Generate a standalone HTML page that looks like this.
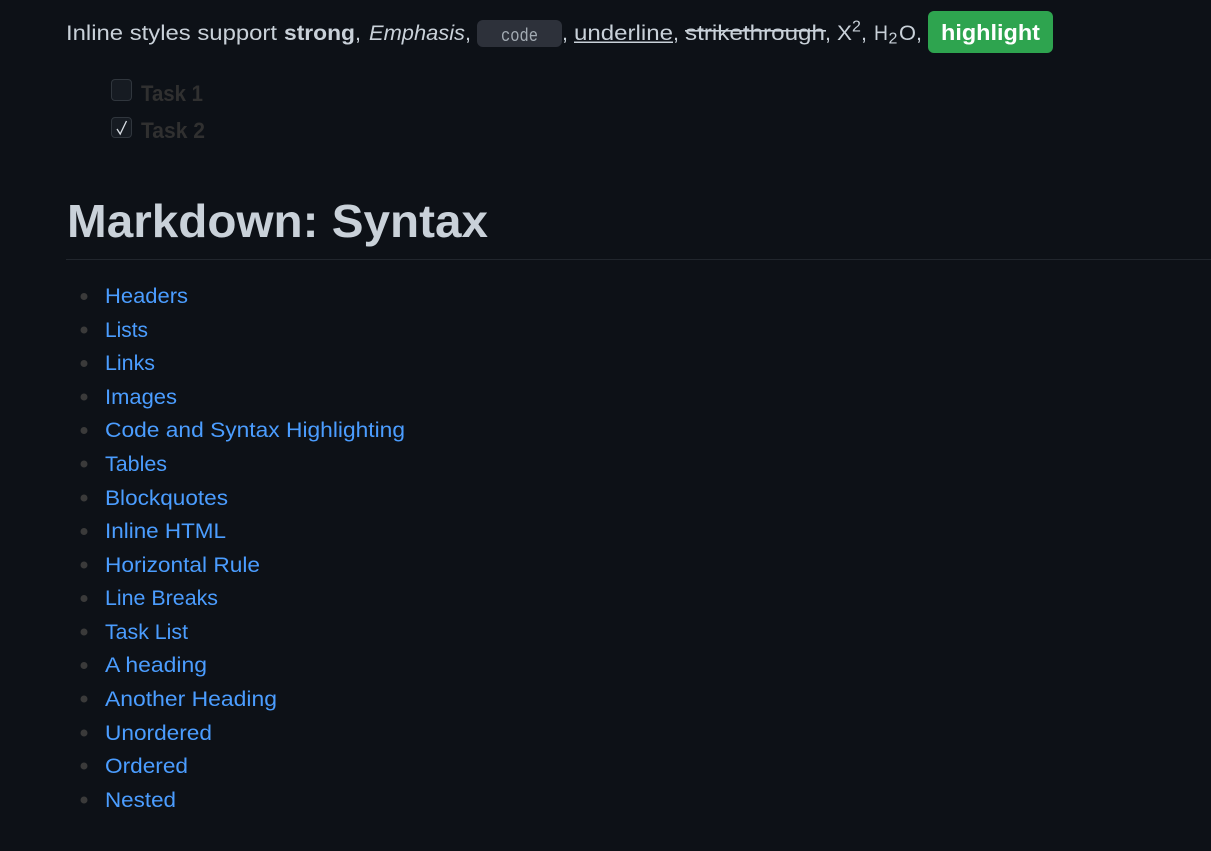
<!DOCTYPE html>
<html lang="en"><head><meta charset="utf-8"><title>Markdown: Syntax</title>
<style>
html,body{margin:0;padding:0;background:#0d1117;width:1211px;height:851px;overflow:hidden}
svg{display:block}
text{font-family:"Liberation Sans",sans-serif;white-space:pre}
.t{font-size:21.5px;fill:#c9d1d9}
.b{font-weight:700}
.l{font-size:21.5px;fill:#4b9dff}
.k{font-size:22px;font-weight:700;fill:#303030}
</style></head><body>
<svg width="1211" height="851" viewBox="0 0 1211 851" xmlns="http://www.w3.org/2000/svg">
<rect width="1211" height="851" fill="#0d1117"/>
<text class="t" x="66" y="40" textLength="211" lengthAdjust="spacingAndGlyphs">Inline styles support</text>
<text class="t b" x="284" y="40" textLength="71" lengthAdjust="spacingAndGlyphs">strong</text>
<text class="t" x="355" y="40">,</text>
<text class="t" x="369" y="40" font-style="italic" textLength="96" lengthAdjust="spacingAndGlyphs">Emphasis</text>
<text class="t" x="465" y="40">,</text>
<rect x="477" y="20" width="85" height="27" rx="6" fill="#2d313a"/>
<text x="501" y="41" font-size="18" style="font-family:'Liberation Mono',monospace" fill="#a3abb3" textLength="37" lengthAdjust="spacingAndGlyphs">code</text>
<text class="t" x="562" y="40">,</text>
<text class="t" x="574" y="40" textLength="99" lengthAdjust="spacingAndGlyphs">underline</text>
<rect x="574" y="41.5" width="99" height="1.5" fill="#c9d1d9"/>
<text class="t" x="673" y="40">,</text>
<text class="t" x="685" y="40" textLength="140" lengthAdjust="spacingAndGlyphs">strikethrough</text>
<rect x="685" y="30" width="141" height="1.6" fill="#c9d1d9"/>
<text class="t" x="825" y="40">,</text>
<text class="t" x="837" y="40" textLength="15" lengthAdjust="spacingAndGlyphs">X</text>
<text class="t" x="852" y="31.5" style="font-size:16px">2</text>
<text class="t" x="861" y="40">,</text>
<text class="t" x="874" y="40" textLength="14" lengthAdjust="spacingAndGlyphs">H</text>
<text class="t" x="888.5" y="43.5" style="font-size:16px">2</text>
<text class="t" x="899" y="40" textLength="17" lengthAdjust="spacingAndGlyphs">O</text>
<text class="t" x="916" y="40">,</text>
<rect x="928" y="11" width="125" height="42" rx="6" fill="#2ea44f"/>
<text x="941" y="40" font-size="22" font-weight="700" fill="#fff" textLength="99" lengthAdjust="spacingAndGlyphs">highlight</text>

<rect x="111.5" y="79.5" width="20" height="21" rx="3.5" fill="#161b22" stroke="#30363d"/>
<text class="k" x="141" y="101" textLength="62" lengthAdjust="spacingAndGlyphs">Task 1</text>
<rect x="111.5" y="117.5" width="20" height="20" rx="3.5" fill="#161b22" stroke="#30363d"/>
<path d="M117 129l3.2 5L126.5 121" fill="none" stroke="#d8dee4" stroke-width="1.3"/>
<text class="k" x="141" y="138" textLength="64" lengthAdjust="spacingAndGlyphs">Task 2</text>

<text x="67" y="237" font-size="46" font-weight="700" fill="#c9d1d9" textLength="421" lengthAdjust="spacingAndGlyphs">Markdown: Syntax</text>
<rect x="66" y="259" width="1145" height="1" fill="#21262d"/>

<g fill="#3a3a3a">
<circle cx="84" cy="296.5" r="3.5"/><circle cx="84" cy="330" r="3.5"/><circle cx="84" cy="363.5" r="3.5"/><circle cx="84" cy="397" r="3.5"/>
<circle cx="84" cy="430.5" r="3.5"/><circle cx="84" cy="464" r="3.5"/><circle cx="84" cy="498" r="3.5"/><circle cx="84" cy="531.5" r="3.5"/>
<circle cx="84" cy="565" r="3.5"/><circle cx="84" cy="598.5" r="3.5"/><circle cx="84" cy="632" r="3.5"/><circle cx="84" cy="665.5" r="3.5"/>
<circle cx="84" cy="699" r="3.5"/><circle cx="84" cy="733" r="3.5"/><circle cx="84" cy="766" r="3.5"/><circle cx="84" cy="800" r="3.5"/>
</g>
<text class="l" x="105" y="303" textLength="83" lengthAdjust="spacingAndGlyphs">Headers</text>
<text class="l" x="105" y="337" textLength="43" lengthAdjust="spacingAndGlyphs">Lists</text>
<text class="l" x="105" y="370" textLength="50" lengthAdjust="spacingAndGlyphs">Links</text>
<text class="l" x="105" y="404" textLength="72" lengthAdjust="spacingAndGlyphs">Images</text>
<text class="l" x="105" y="437" textLength="300" lengthAdjust="spacingAndGlyphs">Code and Syntax Highlighting</text>
<text class="l" x="105" y="471" textLength="62" lengthAdjust="spacingAndGlyphs">Tables</text>
<text class="l" x="105" y="505" textLength="123" lengthAdjust="spacingAndGlyphs">Blockquotes</text>
<text class="l" x="105" y="538" textLength="121" lengthAdjust="spacingAndGlyphs">Inline HTML</text>
<text class="l" x="105" y="572" textLength="155" lengthAdjust="spacingAndGlyphs">Horizontal Rule</text>
<text class="l" x="105" y="605" textLength="113" lengthAdjust="spacingAndGlyphs">Line Breaks</text>
<text class="l" x="105" y="639" textLength="83" lengthAdjust="spacingAndGlyphs">Task List</text>
<text class="l" x="105" y="672" textLength="102" lengthAdjust="spacingAndGlyphs">A heading</text>
<text class="l" x="105" y="706" textLength="172" lengthAdjust="spacingAndGlyphs">Another Heading</text>
<text class="l" x="105" y="740" textLength="107" lengthAdjust="spacingAndGlyphs">Unordered</text>
<text class="l" x="105" y="773" textLength="83" lengthAdjust="spacingAndGlyphs">Ordered</text>
<text class="l" x="105" y="807" textLength="71" lengthAdjust="spacingAndGlyphs">Nested</text>
</svg>
</body></html>
